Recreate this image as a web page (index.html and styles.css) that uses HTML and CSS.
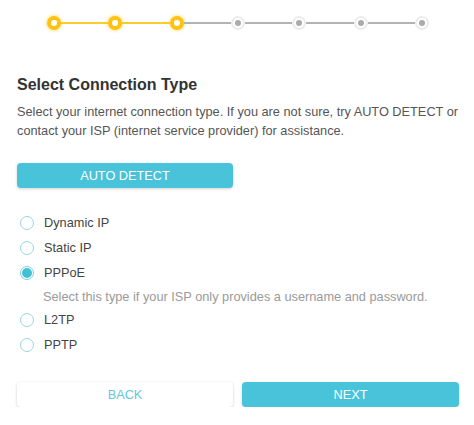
FILE: index.html
```html
<!DOCTYPE html>
<html>
<head>
<meta charset="utf-8">
<link rel="stylesheet" href="styles.css">
</head>
<body>
<div class="page">
  <div class="stepper">
    <span class="dot done"></span><span class="line done"></span>
    <span class="dot done"></span><span class="line done"></span>
    <span class="dot done"></span><span class="line"></span>
    <span class="dot"></span><span class="line"></span>
    <span class="dot"></span><span class="line"></span>
    <span class="dot"></span><span class="line"></span>
    <span class="dot"></span>
  </div>
  <h1 class="title">Select Connection Type</h1>
  <p class="desc">Select your internet connection type. If you are not sure, try AUTO DETECT or contact your ISP (internet service provider) for assistance.</p>
  <button class="btn primary auto">AUTO DETECT</button>
  <div class="options">
    <div class="opt"><span class="radio"></span><span class="label">Dynamic IP</span></div>
    <div class="opt"><span class="radio"></span><span class="label">Static IP</span></div>
    <div class="opt"><span class="radio checked"></span><span class="label">PPPoE</span></div>
    <div class="note">Select this type if your ISP only provides a username and password.</div>
    <div class="opt"><span class="radio"></span><span class="label">L2TP</span></div>
    <div class="opt"><span class="radio"></span><span class="label">PPTP</span></div>
  </div>
  <div class="actions">
    <button class="btn secondary">BACK</button>
    <button class="btn primary">NEXT</button>
  </div>
</div>
</body>
</html>
```
FILE: styles.css
```css
* { box-sizing: border-box; }
html, body { margin: 0; padding: 0; background: #fff; }
body { font-family: "Liberation Sans", Arial, sans-serif; color: #333; }
.page { width: 474px; padding: 0 15px 0 17px; }

.stepper {
  display: flex;
  align-items: center;
  margin: 15px 0 0 30px;
  width: 382px;
  height: 15px;
}
.dot {
  flex: none;
  width: 14px;
  height: 14px;
  border-radius: 50%;
  border: 2px solid #ececec;
  background: #fff;
  display: flex;
  align-items: center;
  justify-content: center;
}
.dot::after {
  content: "";
  width: 6px;
  height: 6px;
  border-radius: 50%;
  background: #ababab;
}
.dot.done {
  border: 4px solid #ffc20e;
  box-shadow: 0 0 3px 1px rgba(255, 200, 30, 0.45);
}
.dot.done::after { background: #fff; width: 5px; height: 5px; }
.line {
  flex: 1;
  height: 2px;
  background: #b3b3b3;
  margin-top: 1px;
}
.line.done { background: #fbcd2a; }

.title {
  margin: 45px 0 0 0;
  font-size: 16px;
  line-height: 20px;
  font-weight: bold;
  color: #333;
}
.desc {
  margin: 7px 0 0 0;
  font-size: 12.75px;
  line-height: 19px;
  color: #555;
}
.btn {
  font-family: "Liberation Sans", Arial, sans-serif;
  font-size: 12.75px;
  height: 25px;
  width: 216px;
  border: none;
  border-radius: 4px;
  padding: 0;
  cursor: pointer;
}
.btn.primary {
  background: #49c3d9;
  color: #fff;
  box-shadow: 0 1px 3px rgba(0, 0, 0, 0.18);
}
.btn.secondary {
  background: #fff;
  color: #63c8da;
  box-shadow: 0 1px 3px rgba(0, 0, 0, 0.2);
}
.auto { display: block; margin-top: 23px; }

.options { margin-top: 22px; display: flex; flex-direction: column; }
.opt {
  display: flex;
  align-items: center;
  height: 25px;
  font-size: 12.75px;
  color: #444;
}
.radio {
  flex: none;
  width: 14px;
  height: 14px;
  border-radius: 50%;
  border: 1px solid #9ad7e2;
  margin: 0 10px 0 3px;
  display: flex;
  align-items: center;
  justify-content: center;
}
.radio.checked { border-color: #7cd0de; }
.radio.checked::after {
  content: "";
  width: 10px;
  height: 10px;
  border-radius: 50%;
  background: #44c0d6;
}
.label { line-height: 16px; }
.note {
  font-size: 12.75px;
  color: #9a9a9a;
  line-height: 23px;
  padding-left: 26px;
  height: 22px;
}

.actions {
  display: flex;
  gap: 9px;
  margin-top: 25px;
}
.actions .btn { width: 216px; }
.actions .btn.primary { width: 217px; }
```
